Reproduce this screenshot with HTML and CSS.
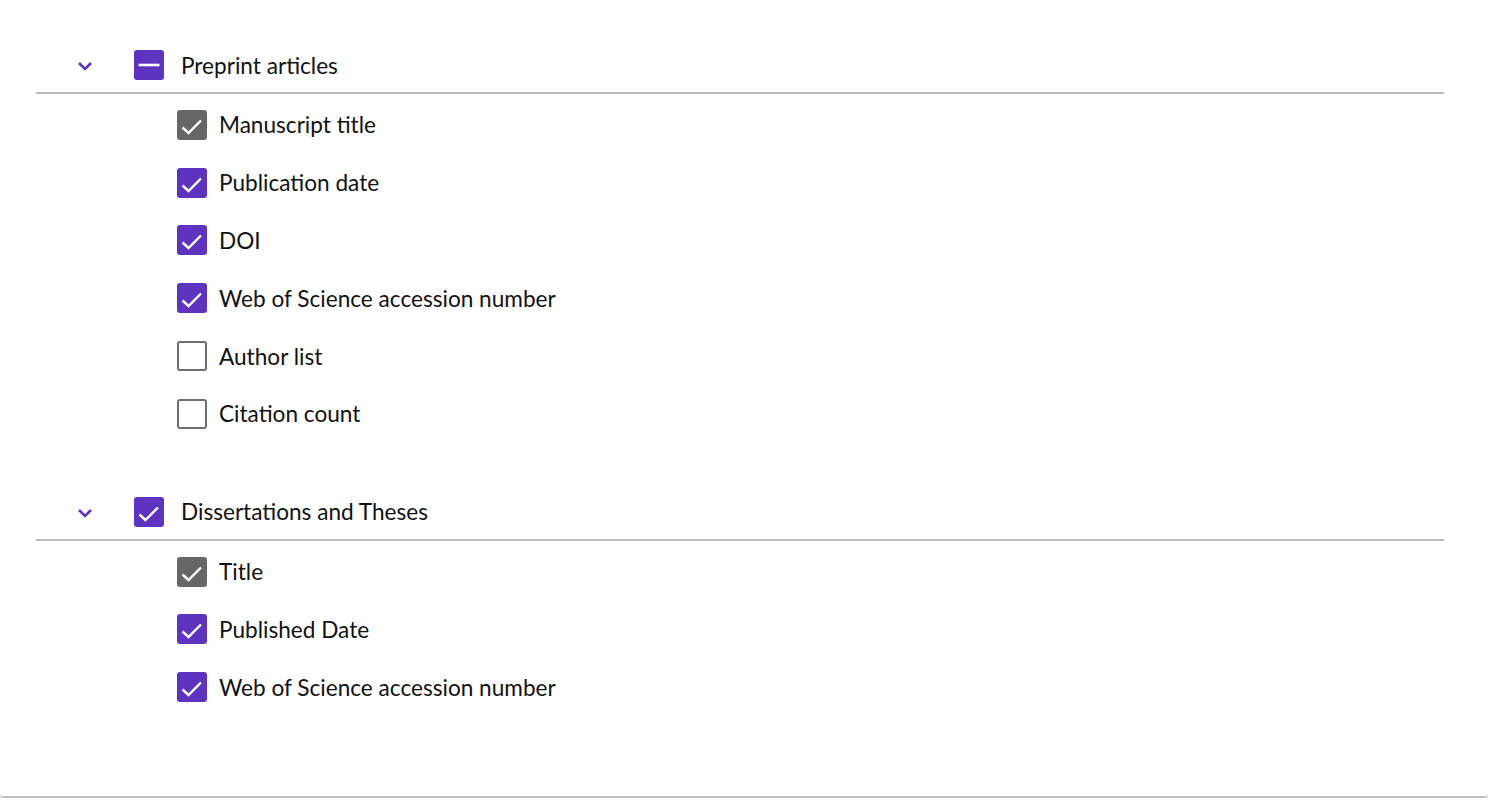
FILE: index.html
```html
<!DOCTYPE html>
<html lang="en">

<head>
    <meta charset="UTF-8">
    <meta name="viewport" content="width=device-width, initial-scale=1.0">
    <title>Export fields</title>
    <link rel="stylesheet" href="styles.css">
</head>

<body>
    <div class="panel">
        <div class="group">
            <div class="group-head">
                <svg class="chevron" width="16" height="10" viewBox="0 0 16 10"><path d="M2 2 L8 8 L14 2" fill="none" stroke="#5e33bf" stroke-width="2.6"/></svg>
                <span class="box purple">
                    <svg width="30" height="30" viewBox="0 0 30 30"><path d="M4.5 15 H25.5" stroke="#fff" stroke-width="2.6"/></svg>
                </span>
                <span class="label">Preprint articles</span>
            </div>
            <div class="items">
                <div class="item">
                    <span class="box gray"><svg width="30" height="30" viewBox="0 0 30 30"><path d="M5.5 17.5 L11.5 23 L24 10.5" fill="none" stroke="#fff" stroke-width="2.4"/></svg></span>
                    <span class="label">Manuscript title</span>
                </div>
                <div class="item">
                    <span class="box purple"><svg width="30" height="30" viewBox="0 0 30 30"><path d="M5.5 17.5 L11.5 23 L24 10.5" fill="none" stroke="#fff" stroke-width="2.4"/></svg></span>
                    <span class="label">Publication date</span>
                </div>
                <div class="item">
                    <span class="box purple"><svg width="30" height="30" viewBox="0 0 30 30"><path d="M5.5 17.5 L11.5 23 L24 10.5" fill="none" stroke="#fff" stroke-width="2.4"/></svg></span>
                    <span class="label">DOI</span>
                </div>
                <div class="item">
                    <span class="box purple"><svg width="30" height="30" viewBox="0 0 30 30"><path d="M5.5 17.5 L11.5 23 L24 10.5" fill="none" stroke="#fff" stroke-width="2.4"/></svg></span>
                    <span class="label">Web of Science accession number</span>
                </div>
                <div class="item">
                    <span class="box empty"></span>
                    <span class="label">Author list</span>
                </div>
                <div class="item">
                    <span class="box empty"></span>
                    <span class="label">Citation count</span>
                </div>
            </div>
        </div>

        <div class="group second">
            <div class="group-head">
                <svg class="chevron" width="16" height="10" viewBox="0 0 16 10"><path d="M2 2 L8 8 L14 2" fill="none" stroke="#5e33bf" stroke-width="2.6"/></svg>
                <span class="box purple"><svg width="30" height="30" viewBox="0 0 30 30"><path d="M5.5 17.5 L11.5 23 L24 10.5" fill="none" stroke="#fff" stroke-width="2.4"/></svg></span>
                <span class="label">Dissertations and Theses</span>
            </div>
            <div class="items">
                <div class="item">
                    <span class="box gray"><svg width="30" height="30" viewBox="0 0 30 30"><path d="M5.5 17.5 L11.5 23 L24 10.5" fill="none" stroke="#fff" stroke-width="2.4"/></svg></span>
                    <span class="label">Title</span>
                </div>
                <div class="item">
                    <span class="box purple"><svg width="30" height="30" viewBox="0 0 30 30"><path d="M5.5 17.5 L11.5 23 L24 10.5" fill="none" stroke="#fff" stroke-width="2.4"/></svg></span>
                    <span class="label">Published Date</span>
                </div>
                <div class="item">
                    <span class="box purple"><svg width="30" height="30" viewBox="0 0 30 30"><path d="M5.5 17.5 L11.5 23 L24 10.5" fill="none" stroke="#fff" stroke-width="2.4"/></svg></span>
                    <span class="label">Web of Science accession number</span>
                </div>
            </div>
        </div>
    </div>
</body>

</html>
```

FILE: styles.css
```css
* {
    margin: 0;
    padding: 0;
    box-sizing: border-box;
}

body {
    font-family: Lato, "Noto Sans", sans-serif;
    color: #111;
    background: #fff;
}

.panel {
    height: 798px;
    padding: 41px 44px 0 36px;
    border-bottom: 2px solid #c2c2c2;
    border-radius: 0 0 4px 4px;
    box-shadow: 0 1px 1px rgba(0, 0, 0, 0.15);
}

.group.second {
    margin-top: 45px;
}

.group-head {
    display: flex;
    align-items: center;
    height: 53px;
    padding: 0 0 3px 41px;
    border-bottom: 2px solid #bdbdbd;
}

.chevron {
    display: block;
    margin-top: 2px;
    margin-right: 41px;
}

.group-head .label {
    margin-left: 17px;
}

.label {
    font-size: 22.6px;
}

.items {
    padding: 2px 0 0 141px;
}

.item {
    display: flex;
    align-items: center;
    height: 57.8px;
}

.item .label {
    margin-left: 12px;
}

.box {
    display: block;
    width: 30px;
    height: 30px;
    border-radius: 3px;
    flex-shrink: 0;
}

.box svg {
    display: block;
}

.box.purple {
    background: #5e33bf;
}

.box.gray {
    background: #666;
}

.box.empty {
    border: 2px solid #6e6e6e;
}
```
